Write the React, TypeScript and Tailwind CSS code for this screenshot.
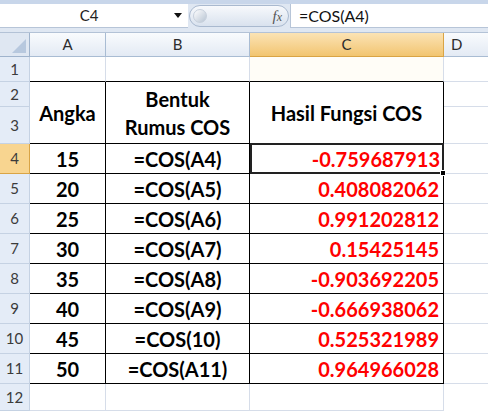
import React from 'react';

const rows = [
  { n: 4, a: '15', b: '=COS(A4)', c: '-0.759687913' },
  { n: 5, a: '20', b: '=COS(A5)', c: '0.408082062' },
  { n: 6, a: '25', b: '=COS(A6)', c: '0.991202812' },
  { n: 7, a: '30', b: '=COS(A7)', c: '0.15425145' },
  { n: 8, a: '35', b: '=COS(A8)', c: '-0.903692205' },
  { n: 9, a: '40', b: '=COS(A9)', c: '-0.666938062' },
  { n: 10, a: '45', b: '=COS(10)', c: '0.525321989' },
  { n: 11, a: '50', b: '=COS(A11)', c: '0.964966028' },
];

const rowHead = 'flex items-center justify-center bg-[#e4ecf7] border-r border-b border-[#c5d2e3] text-[15px] text-[#3b3b3b]';
const blank = 'border-r border-b border-[#d6dde9] bg-white';
const cellText = 'text-[20px] font-bold leading-none';

const App: React.FC = () => {
  return (
    <div className="w-[488px] h-[411px] overflow-hidden bg-white flex flex-col" style={{ fontFamily: 'Lato, "Liberation Sans", sans-serif' }}>
      {/* formula bar */}
      <div className="h-[33px] shrink-0 flex flex-col bg-[#dfe7f2]">
        <div className="h-[4px] bg-[#c8d6ea]" />
        <div className="flex h-[24px] items-stretch">
          <div className="w-[188px] bg-white border-b border-[#b7c5d8] flex items-center relative">
            <span className="flex-1 text-center text-[15px] text-[#222] pr-[10px]">C4</span>
            <svg className="absolute left-[174px] top-[9px]" width="8" height="5" viewBox="0 0 8 5"><path d="M0 0h8L4 5z" fill="#111" /></svg>
          </div>
          <div className="w-[102px] px-[1px] flex items-center bg-[#dfe7f2]">
            <div className="relative w-full h-[22px] rounded-full border border-[#a9b9cf] bg-gradient-to-b from-[#f7f9fc] to-[#d9e2ee] flex items-center justify-end pr-[6px]">
              <div className="absolute left-[3px] top-[3px] w-[14px] h-[14px] rounded-full bg-gradient-to-br from-[#ffffff] to-[#b8c4d3] border border-[#c7d0dc]" />
              <span className="text-[15px] italic text-[#555]" style={{ fontFamily: '"Liberation Serif", serif' }}>f<span className="text-[12px]">x</span></span>
            </div>
          </div>
          <div className="flex-1 bg-white border-l border-b border-[#b7c5d8] flex items-center pl-[8px] text-[16px] text-[#111]">=COS(A4)</div>
        </div>
        <div className="flex-1 border-b border-[#b3c2d6]" />
      </div>

      {/* sheet */}
      <div className="flex-1 grid grid-cols-[30px_76px_144px_194px_1fr] grid-rows-[24px_25px_25px_37px_repeat(8,30px)_1fr]">
        {/* column header */}
        <div className="bg-[#dfe7f2] border-r border-b border-[#9fb3cc] flex items-end justify-end p-[3px]">
          <svg width="14" height="14" viewBox="0 0 14 14"><path d="M14 0v14H0z" fill="#b7c8de" /></svg>
        </div>
        <div className="bg-gradient-to-b from-[#f9fbfd] to-[#e3eaf4] border-r border-b border-[#a9bcd3] flex items-center justify-center text-[15px] text-[#2c2c2c]">A</div>
        <div className="bg-gradient-to-b from-[#f9fbfd] to-[#e3eaf4] border-r border-b border-[#a9bcd3] flex items-center justify-center text-[15px] text-[#2c2c2c]">B</div>
        <div className="bg-gradient-to-b from-[#fbe3b4] to-[#f2c570] border-r border-b border-[#d9a445] flex items-center justify-center text-[15px] text-[#2c2c2c]">C</div>
        <div className="bg-gradient-to-b from-[#f9fbfd] to-[#e3eaf4] border-b border-[#a9bcd3] flex items-center pl-[7px] text-[15px] text-[#2c2c2c]">D</div>

        {/* row 1 */}
        <div className={rowHead}>1</div>
        <div className="border-r border-b border-r-[#d6dde9] border-b-black bg-white" />
        <div className="border-r border-b border-r-[#d6dde9] border-b-black bg-white" />
        <div className="border-r border-b border-r-[#d6dde9] border-b-black bg-[#fffdf7]" />
        <div className="border-b border-[#d6dde9]" />

        {/* rows 2-3 */}
        <div className={rowHead}>2</div>
        <div className={`row-span-2 border-r border-b border-black flex items-center justify-center ${cellText}`}>Angka</div>
        <div className={`row-span-2 border-r border-b border-black flex flex-col items-center justify-center gap-[8px] ${cellText}`}>
          <span>Bentuk</span>
          <span>Rumus COS</span>
        </div>
        <div className={`row-span-2 border-r border-b border-black flex items-center justify-center ${cellText}`}>Hasil Fungsi COS</div>
        <div className="border-b border-[#d6dde9]" />
        <div className={rowHead}>3</div>
        <div className="border-b border-[#d6dde9]" />

        {rows.map((r) => (
          <React.Fragment key={r.n}>
            <div className={r.n === 4 ? 'flex items-center justify-center bg-[#f8d590] border-r border-b border-[#d9a445] text-[15px] text-[#3b3b3b]' : rowHead}>{r.n}</div>
            <div className={`border-r border-b border-black flex items-center justify-center ${cellText}`}>{r.a}</div>
            <div className={`border-r border-b border-black flex items-center justify-center ${cellText}`}>{r.b}</div>
            {r.n === 4 ? (
              <div className={`relative border-2 border-t-[#222] border-l-[#222] border-r-[#222] border-b-[#222] -mt-[1px] flex items-center justify-end pr-[2px] text-[#ff0000] ${cellText}`}>
                {r.c}
                <div className="absolute -right-[4px] -bottom-[4px] w-[6px] h-[6px] bg-black border border-white" />
              </div>
            ) : (
              <div className={`border-r border-b border-black flex items-center justify-end pr-[4px] text-[#ff0000] ${cellText}`}>{r.c}</div>
            )}
            <div className="border-b border-[#d6dde9]" />
          </React.Fragment>
        ))}

        {/* row 12 */}
        <div className={rowHead}>12</div>
        <div className={blank} />
        <div className={blank} />
        <div className={blank} />
        <div />
      </div>
    </div>
  );
};

export default App;
